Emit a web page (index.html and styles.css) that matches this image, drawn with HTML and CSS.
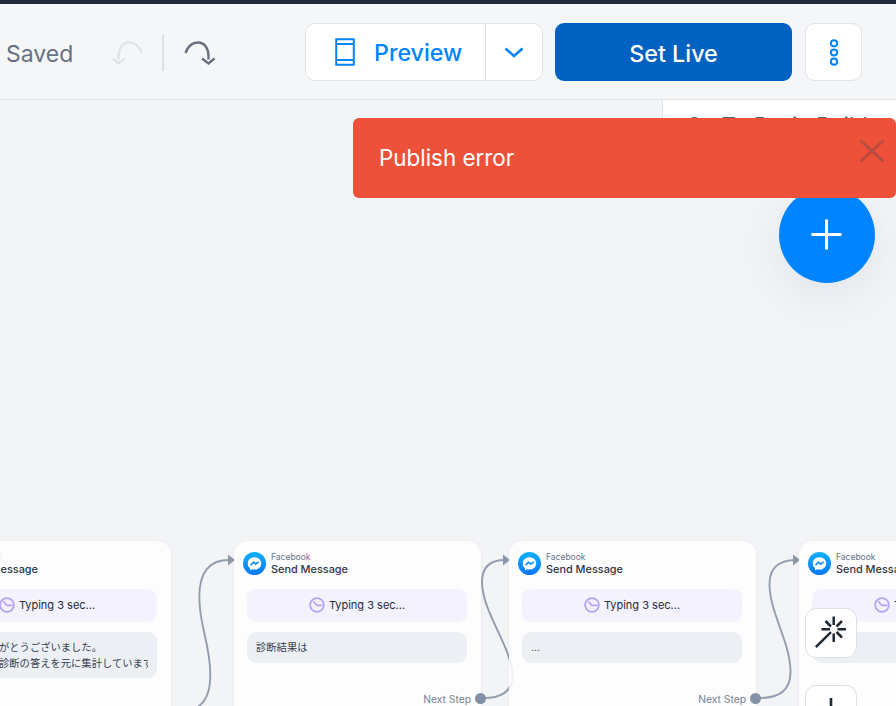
FILE: index.html
```html
<!DOCTYPE html>
<html lang="en">
<head>
<meta charset="utf-8">
<title>Flow Builder</title>
<link rel="stylesheet" href="styles.css">
</head>
<body>
<svg class="defs" width="0" height="0">
  <defs>
    <linearGradient id="blue" x1="0" y1="0" x2="0" y2="1"><stop offset="0" stop-color="#12b1ff"/><stop offset="1" stop-color="#0877f8"/></linearGradient>
    <symbol id="messenger" viewBox="0 0 24 24"><circle cx="12" cy="12" r="12" fill="url(#blue)"/><path d="M12 5.400c-4 0-7 2.800-7 6.500 0 2 .9 3.700 2.300 4.900v2.200l2.200-1.100c.8.2 1.600.4 2.500.4 4 0 7-2.800 7-6.400s-3-6.500-7-6.500z" fill="#fff"/><path d="M7.800 13.800l3.200-3.200 2.200 2 3.300-2.300" fill="none" stroke="#1596ff" stroke-width="1.800"/></symbol>
    <symbol id="clock" viewBox="0 0 16 16"><circle cx="8" cy="8" r="6.900" fill="#f4f0ff" stroke="#b4a4f0" stroke-width="1.700"/><path d="M4.200 4.500l3.900 3.900h5.400" fill="none" stroke="#b4a4f0" stroke-width="1.700"/></symbol>
  </defs>
</svg>
<div class="app">
  <header class="topbar">
    <span class="saved">Saved</span>
    <div class="history">
      <svg class="undo" width="32" height="26" viewBox="0 0 32 26"><path d="M30 12C27 5 22 1.500 17 1.500 10 1.500 6.500 8 6.500 15v3.500M1 17.500l5.500 5 6-5"/></svg>
      <i class="rule"></i>
      <svg class="redo" width="32" height="26" viewBox="0 0 32 26"><path d="M1.500 12C4 5 9 1.500 14 1.500c7 0 10.500 6.500 10.500 13.500v3.500M18 17.500l6.500 5 6-5"/></svg>
    </div>
    <div class="split">
      <div class="preview">
        <svg width="20" height="28" viewBox="0 0 20 28"><path d="M1.200 1.200h17.600v25.600H1.200zM2 6h16M2 22h16" fill="none" stroke="#0084ff" stroke-width="2"/></svg>
        <span>Preview</span>
      </div>
      <div class="more"><svg width="20" height="12" viewBox="0 0 20 12"><path d="M1.500 2.500L10 10l8.500-7.500" fill="none" stroke="#0084ff" stroke-width="2.500"/></svg></div>
    </div>
    <div class="live">Set Live</div>
    <div class="menu"><svg width="10" height="28" viewBox="0 0 10 28" fill="none" stroke="#0084ff" stroke-width="2"><circle cx="5" cy="5.300" r="3.100"/><circle cx="5" cy="14.500" r="3.100"/><circle cx="5" cy="23.700" r="3.100"/></svg></div>
  </header>
  <main class="canvas">
    <svg class="edges" width="896" height="606" viewBox="0 100 896 606">
      <g fill="none" stroke="#939daf" stroke-width="1.900">
        <path d="M196 708C207 702 210.300 690 210.300 675C210.300 643 199.300 627 199.300 597C199.300 574 208 560 229 560"/>
        <path d="M480 698C500 699 512.500 692 512.500 676C512.500 648 482 612 482 582C482 568 489 560 505 560"/>
        <path d="M755 698C780 699 790.500 690 790.500 672C790.500 642 769.500 613 769.500 584C769.500 570 777 560 796 560"/>
      </g>
      <path fill="#8d97a9" d="M228 554.500l7 5.500-7 5.500zM503 554.500l7 5.500-7 5.500zM793 554.500l7 5.500-7 5.500z"/>
    </svg>
    <article class="node n1">
      <div class="head"><svg width="23" height="23"><use href="#messenger"/></svg><div><small>Facebook</small><b>Send Message</b></div></div>
      <div class="typing"><svg width="16" height="16"><use href="#clock"/></svg><span>Typing 3 sec...</span></div>
      <div class="text wide"><p>がとうございました。</p><p>診断の答えを元に集計しています</p></div>
    </article>
    <article class="node n2">
      <div class="head"><svg width="23" height="23"><use href="#messenger"/></svg><div><small>Facebook</small><b>Send Message</b></div></div>
      <div class="typing"><svg width="16" height="16"><use href="#clock"/></svg><span>Typing 3 sec...</span></div>
      <div class="text"><p>診断結果は</p></div>
      <div class="next">Next Step<i></i></div>
    </article>
    <article class="node n3">
      <div class="head"><svg width="23" height="23"><use href="#messenger"/></svg><div><small>Facebook</small><b>Send Message</b></div></div>
      <div class="typing"><svg width="16" height="16"><use href="#clock"/></svg><span>Typing 3 sec...</span></div>
      <div class="text"><p>...</p></div>
      <div class="next">Next Step<i></i></div>
    </article>
    <article class="node n4">
      <div class="head"><svg width="23" height="23"><use href="#messenger"/></svg><div><small>Facebook</small><b>Send Message</b></div></div>
      <div class="typing"><svg width="16" height="16"><use href="#clock"/></svg><span>Typing 3 sec...</span></div>
      <div class="text"></div>
    </article>
    <div class="basic">Go To Basic Builder</div>
    <div class="add"><svg width="32" height="32" viewBox="0 0 32 32"><path d="M15.500 .5v30M.5 15.500h30" stroke="#fff" stroke-width="3"/></svg></div>
    <div class="tools">
      <div class="tool"><svg width="34" height="34" viewBox="0 0 34 34"><path d="M1.800 31.200L17 16.200M19.700 .5v8.500M19.700 17.500v8.500M7.500 13.300H16M23.500 13.300H32M11.500 5l5.500 5.500M28 5l-5.500 5.500M22.500 16l5.500 5.500" fill="none" stroke="#1f2937" stroke-width="2.500"/></svg></div>
      <div class="tool"><svg width="26" height="24" viewBox="0 0 26 24"><path d="M13 0v24M0 12h26" stroke="#1f2937" stroke-width="2.600"/></svg></div>
    </div>
    <div class="toast"><span>Publish error</span><svg width="26" height="24" viewBox="0 0 26 24"><path d="M1.500 1.500l23 21M24.500 1.500l-23 21" stroke="#bd4a3b" stroke-width="3"/><path d="M2 2l22 20" stroke="#8b6763" stroke-width="1.200" stroke-dasharray="1 2"/></svg></div>
  </main>
</div>
</body>
</html>
```
FILE: styles.css
```css
* { box-sizing: border-box; }
body { margin: 0; font-family: Inter, "Noto Sans CJK JP", sans-serif; }
svg { display: block; flex: none; }
.defs { position: absolute; }
.app { width: 896px; height: 706px; overflow: hidden; background: #f3f4f6; display: flex; flex-direction: column; }
.topbar { height: 100px; flex: none; display: flex; align-items: center; padding: 0 34px 0 6px; border-top: 4px solid #232a39; border-bottom: 1px solid #dfe2e7; background: #f5f6f8; }
.topbar > * { margin-top: 1px; }
.topbar .saved { width: 106px; margin-top: 5px; font-size: 23px; line-height: 30px; color: #667085; }
.history { width: 193px; display: flex; align-items: center; }
.history svg { fill: none; stroke: #667080; stroke-width: 2.400; margin-top: 3px; }
.history .undo { stroke: #e0e4ea; }
.rule { width: 2px; height: 37px; margin: 0 20px 0 18px; background: #dce1e8; }
.split { width: 238px; height: 58px; display: flex; border: 1px solid #dfe2e7; border-radius: 10px; background: #fff; margin-right: 12px; }
.preview { width: 180px; display: flex; align-items: center; gap: 19px; padding-left: 29px; border-right: 1px solid #dfe2e7; font-size: 23.200px; font-weight: 500; color: #0084ff; }
.preview span { padding-top: 2px; }
.more { flex: 1; display: flex; align-items: center; justify-content: center; }
.live { width: 237px; height: 58px; line-height: 62px; border-radius: 9px; background: #0062c0; color: #fff; font-size: 23.300px; font-weight: 500; text-align: center; margin-right: 13px; }
.menu { width: 57px; height: 58px; border: 1px solid #dfe2e7; border-radius: 10px; background: #fff; display: flex; align-items: center; justify-content: center; }
.canvas { position: relative; flex: 1; overflow: hidden; }
.edges { position: absolute; left: 0; top: 0; }
.node { position: absolute; top: 441px; width: 247px; height: 220px; border-radius: 14px; background: rgba(254, 254, 255, .86); box-shadow: 0 1px 4px rgba(90, 110, 150, .09); padding: 10px 14px 0 13px; }
.n1 { left: -76px; }
.n2 { left: 234px; }
.n3 { left: 509px; }
.n4 { left: 799px; }
.head { display: flex; align-items: center; gap: 5px; height: 26px; margin-left: -4px; }
.head svg { margin-top: -1px; }
.head small { display: block; font-size: 8.500px; line-height: 11px; color: #687388; }
.head b { display: block; font-size: 10.900px; line-height: 13px; font-weight: 500; color: #303846; white-space: nowrap; }
.typing { height: 33px; margin-top: 12px; padding-bottom: 2px; border-radius: 9px; background: #f4f2fd; display: flex; align-items: center; justify-content: center; gap: 4px; font-size: 11px; color: #252c3a; white-space: nowrap; }
.text { min-height: 31px; margin-top: 10px; padding: 8px 9px 7px; border-radius: 9px; background: #ecf0f5; font-size: 10.300px; line-height: 15.500px; color: #353e4d; }
.text p { margin: 0; overflow: hidden; white-space: nowrap; }
.wide p { margin-left: 53px; }
.next { position: absolute; right: -5px; top: 151px; display: flex; align-items: center; gap: 4px; font-size: 10.300px; line-height: 14px; color: #778195; }
.next i { width: 11px; height: 11px; border-radius: 50%; background: #8490a5; margin-top: -1px; }
.basic { position: absolute; left: 662px; top: 0; width: 240px; height: 80px; padding: 9px 0 0 23px; border-left: 1px solid #dfe2e7; background: #fff; font-size: 22px; line-height: 32px; color: #555f6e; white-space: nowrap; }
.add { position: absolute; left: 779px; top: 87px; width: 96px; height: 96px; border-radius: 50%; background: #0084ff; box-shadow: 0 12px 44px rgba(60, 100, 150, .11); display: flex; align-items: center; justify-content: center; }
.tools { position: absolute; left: 805px; top: 508px; display: grid; gap: 27px; }
.tool { width: 52px; height: 50px; border: 1px solid #dcdfe6; border-radius: 11px; background: #fff; display: flex; align-items: center; justify-content: center; }
.toast { position: absolute; left: 353px; top: 18px; width: 543px; height: 80px; border-radius: 6px; background: #ed513a; color: #fff; font-size: 22.400px; padding: 0 11px 0 26px; display: flex; align-items: center; justify-content: space-between; }
.toast span { padding-bottom: 2px; }
.toast svg { margin-bottom: 14px; }
```
